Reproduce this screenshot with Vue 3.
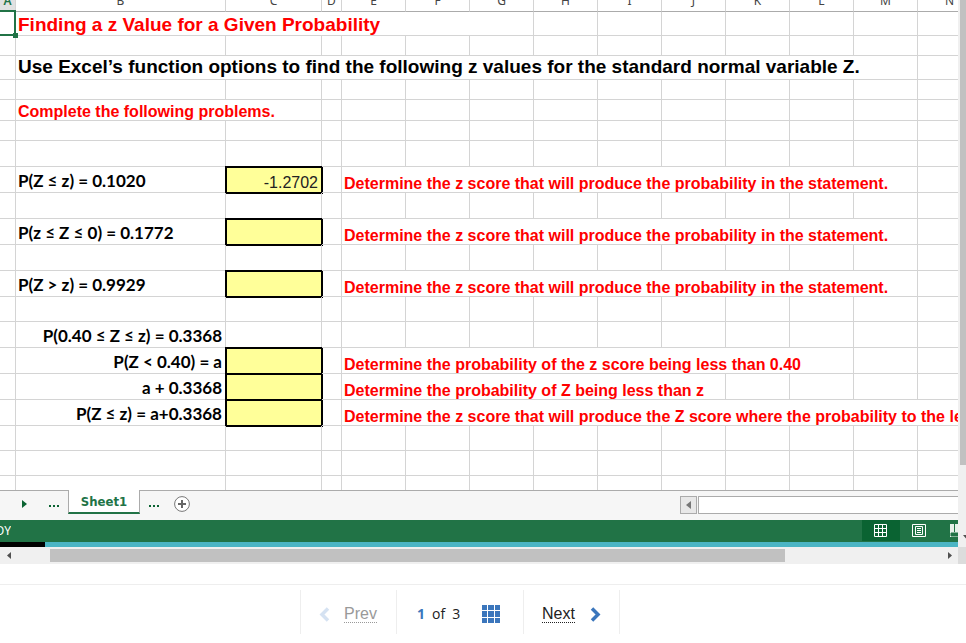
<script setup>
const columns = [
  { name: 'A', width: 16 },
  { name: 'B', width: 210 },
  { name: 'C', width: 96 },
  { name: 'D', width: 20 },
  ...'EFGHIJKLMN'.split('').map((name) => ({ name, width: 64 })),
]

const zHint = 'Determine the z score that will produce the probability in the statement.'

const content = [
  { height: 24, cells: { 1: { kind: 'title', text: 'Finding a z Value for a Given Probability', span: 6 } } },
  { height: 20 },
  { height: 24, cells: { 1: { kind: 'lead', text: 'Use Excel’s function options to find the following z values for the standard normal variable', strong: 'Z.', span: 12 } } },
  { height: 20 },
  { height: 21, cells: { 1: { kind: 'note', text: 'Complete the following problems.', span: 2 } } },
  { height: 20 },
  { height: 26 },
  { height: 26, cells: { 1: { kind: 'label', text: 'P(Z ≤ z) = 0.1020' }, 2: { kind: 'entry', value: '-1.2702' }, 4: { kind: 'note', text: zHint, span: 9 } } },
  { height: 26 },
  { height: 26, cells: { 1: { kind: 'label', text: 'P(z ≤ Z ≤ 0) = 0.1772' }, 2: { kind: 'entry', value: '' }, 4: { kind: 'note', text: zHint, span: 9 } } },
  { height: 26 },
  { height: 26, cells: { 1: { kind: 'label', text: 'P(Z > z) = 0.9929' }, 2: { kind: 'entry', value: '' }, 4: { kind: 'note', text: zHint, span: 9 } } },
  { height: 25 },
  { height: 26, cells: { 1: { kind: 'label right', text: 'P(0.40 ≤ Z ≤ z) = 0.3368' } } },
  { height: 26, cells: { 1: { kind: 'label right', text: 'P(Z < 0.40) = a' }, 2: { kind: 'entry', value: '' }, 4: { kind: 'note', text: 'Determine the probability of the z score being less than 0.40', span: 8 } } },
  { height: 26, cells: { 1: { kind: 'label right', text: 'a + 0.3368' }, 2: { kind: 'entry', value: '' }, 4: { kind: 'note', text: 'Determine the probability of Z being less than z', span: 6 } } },
  { height: 26, cells: { 1: { kind: 'label right', text: 'P(Z ≤ z) = a+0.3368' }, 2: { kind: 'entry', value: '' }, 4: { kind: 'note', text: 'Determine the z score that will produce the Z score where the probability to the left', span: 10 } } },
  { height: 25 },
  { height: 25 },
  { height: 14, last: true },
]

// Expand each sparse row into the full list of cells, skipping columns a merged cell covers.
const rows = content.map((row) => {
  const cells = []
  for (let c = 0; c < columns.length; ) {
    const cell = row.cells?.[c] ?? { kind: 'blank' }
    cells.push({ ...cell, col: c, name: columns[c].name })
    c += cell.span ?? 1
  }
  return { ...row, cells }
})
</script>

<template>
  <main class="page">
    <section class="frame">
      <div class="workbook">
        <div class="sheet">
          <table>
            <colgroup>
              <col v-for="c in columns" :key="c.name" :style="{ width: c.width + 'px' }" />
            </colgroup>
            <thead>
              <tr>
                <th v-for="c in columns" :key="c.name" scope="col" :class="{ active: c.name === 'A' }">{{ c.name }}</th>
              </tr>
            </thead>
            <tbody>
              <tr v-for="(row, r) in rows" :key="r" :class="{ last: row.last }" :style="{ height: row.height + 'px' }">
                <td v-for="cell in row.cells" :key="cell.col" :colspan="cell.span" :class="[cell.kind, { selected: r === 0 && cell.col === 0 }]">
                  <input v-if="cell.kind === 'entry'" type="text" :value="cell.value" :aria-label="`Cell ${cell.name}${r + 1}`" />
                  <template v-else>{{ cell.text }}<b v-if="cell.strong">&nbsp;{{ cell.strong }}</b></template>
                </td>
              </tr>
            </tbody>
          </table>
        </div>

        <div class="tabs">
          <button class="step" type="button" aria-label="Next sheet">
            <svg width="5" height="8" viewBox="0 0 5 8"><path d="M0 0L5 4L0 8Z" fill="#0a6332" /></svg>
          </button>
          <button class="dots" type="button" aria-label="Earlier sheets">
            <svg width="11" height="2" viewBox="0 0 11 2"><path d="M0 0h2v2H0zM4 0h2v2H4zM8 0h2v2H8z" fill="#0a6332" /></svg>
          </button>
          <button class="tab" type="button">Sheet1</button>
          <button class="dots after" type="button" aria-label="Later sheets">
            <svg width="11" height="2" viewBox="0 0 11 2"><path d="M0 0h2v2H0zM4 0h2v2H4zM8 0h2v2H8z" fill="#0a6332" /></svg>
          </button>
          <button class="add" type="button" aria-label="New sheet">
            <svg width="16" height="16" viewBox="0 0 16 16">
              <circle cx="8" cy="8" r="7.4" fill="#fff" stroke="#777" />
              <path d="M8 4v8M4 8h8" stroke="#666" stroke-width="2" />
            </svg>
          </button>
          <div class="sheet-scroll">
            <button type="button" aria-label="Scroll left">
              <svg width="5" height="8" viewBox="0 0 5 8"><path d="M5 0L0 4L5 8Z" fill="#777" /></svg>
            </button>
            <div class="sheet-track"></div>
          </div>
        </div>

        <div class="status">
          <span class="ready">READY</span>
          <div class="views">
            <button class="on" type="button" aria-label="Normal view">
              <svg width="14" height="13" viewBox="0 0 14 13"><path d="M.5 .5h12v12H.5zM4.5 0v13M8.5 0v13M0 4.5h13M0 8.5h13" fill="none" stroke="#fff" /></svg>
            </button>
            <button type="button" aria-label="Page layout">
              <svg width="14" height="13" viewBox="0 0 14 13"><path d="M.5 .5h13v12H.5zM3.500 2.500h7v8h-7zM5 4.500h4M5 6.500h4M5 8.500h4" fill="none" stroke="#fff" /></svg>
            </button>
            <button type="button" aria-label="Page break preview">
              <svg width="14" height="13" viewBox="0 0 14 13"><path d="M0 0h14v13H0z" fill="#e8f1eb" /><path d="M4.500 0v8M1 9h12v3H1z" fill="#217346" stroke="#217346" /></svg>
            </button>
          </div>
        </div>

        <div class="accent"></div>

        <div class="h-scroll">
          <span class="arrow"><svg width="4" height="7" viewBox="0 0 4 7"><path d="M4 0L0 3.500L4 7Z" fill="#505050" /></svg></span>
          <div class="h-track"><div class="h-thumb"></div></div>
          <span class="arrow"><svg width="4" height="7" viewBox="0 0 4 7"><path d="M0 0L4 3.500L0 7Z" fill="#505050" /></svg></span>
        </div>
      </div>

      <div class="v-scroll">
        <div class="v-thumb"></div>
        <svg class="down" width="7" height="4" viewBox="0 0 7 4"><path d="M0 0H7L3.500 4Z" fill="#505050" /></svg>
        <div class="corner"></div>
      </div>
    </section>

    <nav class="pager">
      <a class="cell prev" href="#">
        <svg width="11" height="15" viewBox="0 0 11 15"><path d="M9 1.500L3 7.500L9 13.500" fill="none" stroke="#d5e2f2" stroke-width="3.500" /></svg>
        <span>Prev</span>
      </a>
      <div class="cell count">
        <b>1</b><span>of</span><span>3</span>
        <button type="button" aria-label="All questions">
          <svg width="18" height="18" viewBox="0 0 18 18"><path d="M0 0h5v5H0zM6 0h6v5H6zM13 0h5v5h-5zM0 6h5v6H0zM6 6h6v6H6zM13 6h5v6h-5zM0 13h5v5H0zM6 13h6v5H6zM13 13h5v5h-5z" fill="#3b76bc" /></svg>
        </button>
      </div>
      <a class="cell next" href="#">
        <span>Next</span>
        <svg width="11" height="15" viewBox="0 0 11 15"><path d="M2 1.500L8 7.500L2 13.500" fill="none" stroke="#3b76bc" stroke-width="3.500" /></svg>
      </a>
    </nav>
  </main>
</template>

<style>
body {
  background: #fff;
}
</style>

<style scoped>
.page {
  font-family: 'Liberation Sans', Arial, sans-serif;
  overflow: hidden;
}

button {
  display: flex;
  align-items: center;
  justify-content: center;
  padding: 0;
  border: 0;
  background: none;
  font: inherit;
}

svg {
  display: block;
  flex: none;
}

.frame {
  display: flex;
}

.workbook {
  flex: 1;
  min-width: 0;
  overflow: hidden;
}

/* Grid */
.sheet {
  overflow: hidden;
}

table {
  table-layout: fixed;
  width: 982px;
  margin-top: -8px;
  border-spacing: 0;
}

th,
td {
  box-sizing: border-box;
  padding: 0 2px;
  border-right: 1px solid #d4d4d4;
  border-bottom: 1px solid #d4d4d4;
  white-space: nowrap;
}

th {
  height: 20px;
  padding: 0 0 2px;
  border-bottom-color: #ababab;
  font: 12px/17px 'Noto Sans', sans-serif;
  color: #444;
}

th.active {
  background: #e1e1e1;
  color: #217346;
  font-weight: 600;
}

td {
  vertical-align: bottom;
  text-align: left;
}

.last td {
  border-bottom: 0;
}

.selected {
  position: relative;
}

.selected::before {
  content: '';
  position: absolute;
  inset: -2px -1px -1px -4px;
  border: 2px solid #217346;
}

.selected::after {
  content: '';
  position: absolute;
  right: -3px;
  bottom: -3px;
  width: 5px;
  height: 5px;
  background: #217346;
}

.title,
.lead {
  font-size: 19px;
  line-height: 21px;
  font-weight: bold;
}

.title {
  color: #f00;
}

.lead {
  padding-bottom: 2px;
  color: #000;
}

.note {
  font-size: 16px;
  line-height: 16px;
  font-weight: bold;
  color: #f00;
}

.label {
  font: bold 17px/22px Lato, sans-serif;
  color: #000;
}

.label.right {
  padding-right: 3px;
  text-align: right;
}

.entry {
  padding: 0;
}

.entry input {
  display: block;
  box-sizing: border-box;
  width: 100%;
  height: 25px;
  padding: 6px 3px 0 2px;
  border: solid #000;
  border-width: 1px 0 0 1px;
  border-radius: 0;
  outline: 0;
  box-shadow: 0 0 0 1px #000, 1px 1px 0 1px #000;
  background: #ff9;
  font: 16px/18px 'Liberation Sans', Arial, sans-serif;
  color: #222;
  text-align: right;
}

/* Sheet tabs */
.tabs {
  display: flex;
  height: 30px;
  box-sizing: border-box;
  border-top: 1px solid #ababab;
  background: #f6f6f6;
}

.step {
  width: 49px;
  height: 26px;
}

.dots {
  width: 19px;
  height: 30px;
  justify-content: flex-start;
}

.dots.after {
  width: 34px;
  padding-left: 9px;
}

.tab {
  width: 72px;
  height: 24px;
  margin-top: -1px;
  padding-top: 2px;
  border: solid #ababab;
  border-width: 0 1px;
  border-bottom: 2px solid #217346;
  background: #fff;
  font: bold 13px/20px 'DejaVu Sans Condensed', 'DejaVu Sans', sans-serif;
  color: #217346;
}

.add {
  width: 16px;
  height: 26px;
}

.sheet-scroll {
  display: flex;
  gap: 1px;
  width: 278px;
  margin: 5px 0 6px auto;
}

.sheet-scroll button {
  width: 17px;
  box-sizing: border-box;
  border: 1px solid #ababab;
  background: #e8e8e8;
}

.sheet-track {
  flex: 1;
  border: 1px solid #ababab;
  border-right: 0;
  background: #fff;
}

/* Status bar */
.status {
  display: flex;
  justify-content: space-between;
  height: 22px;
  background: #217346;
  color: #fff;
}

.ready {
  display: flex;
  justify-content: flex-end;
  width: 11px;
  overflow: hidden;
  font: 12px/22px 'Noto Sans', sans-serif;
}

.views {
  display: flex;
  margin-right: -18px;
}

.views button {
  width: 38px;
  height: 21px;
}

.views .on {
  background: #0a6332;
}

.accent {
  height: 5px;
  border-left: 45px solid #000;
  background: #4bb5c4;
}

/* Frame scrollbars */
.h-scroll {
  display: flex;
  height: 17px;
  background: #f0f0f0;
}

.arrow {
  display: flex;
  align-items: center;
  justify-content: center;
  width: 17px;
}

.h-track {
  flex: 1;
  padding: 2px 0;
}

.h-thumb {
  width: 79.5%;
  height: 13px;
  margin-left: 3.6%;
  background: #c1c1c1;
}

.v-scroll {
  display: flex;
  flex-direction: column;
  width: 8px;
  overflow: hidden;
  background: #f0f0f0;
}

.v-thumb {
  height: 465px;
  margin-left: 2px;
  background: #c1c1c1;
}

.down {
  margin: auto 0 8px 5px;
}

.corner {
  height: 17px;
  background: #dcdcdc;
}

/* Question pager */
.pager {
  display: flex;
  justify-content: center;
  margin-top: 20px;
  padding: 5px 46px 9px 0;
  border-top: 1px solid #eee;
}

.cell {
  display: flex;
  align-items: center;
  box-sizing: border-box;
  width: 96px;
  height: 44px;
  padding-top: 4px;
  border-left: 1px solid #eee;
  font-size: 16px;
  line-height: 16px;
  color: #222;
  text-decoration: none;
}

.cell.prev {
  gap: 14px;
  padding-left: 18px;
  color: #999;
}

.prev span,
.next span {
  border-bottom: 1px dotted currentColor;
}

.cell.count {
  gap: 7px;
  width: 127px;
  padding-left: 20px;
  font: 14px/18px 'Open Sans', sans-serif;
}

.count b {
  color: #3b76bc;
}

.count button {
  margin-left: 15px;
}

.cell.next {
  gap: 15px;
  width: 97px;
  padding-left: 18px;
  border-right: 1px solid #eee;
}
</style>
